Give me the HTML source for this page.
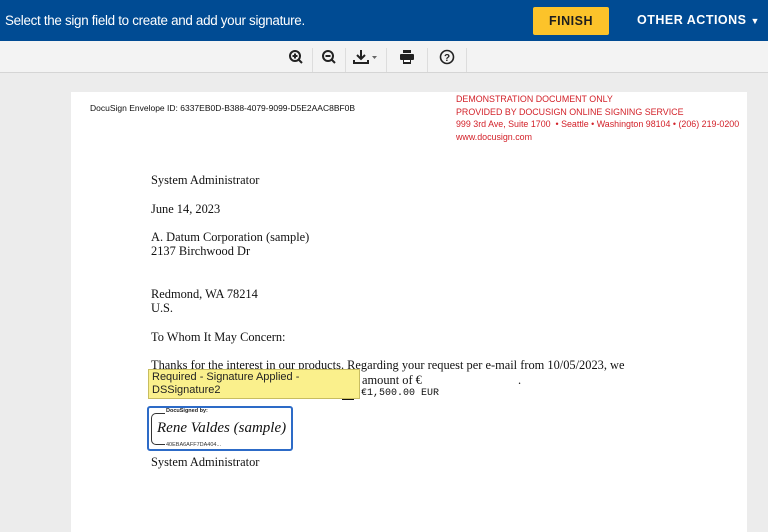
<!DOCTYPE html>
<html><head><style>
*{margin:0;padding:0;box-sizing:border-box}
body{width:768px;height:522px;overflow:hidden;background:#ececec;font-family:"Liberation Sans",sans-serif;position:relative}
.hdr{position:absolute;left:0;top:0;width:768px;height:41px;background:#004b93;color:#fff}
.hdr .msg{position:absolute;left:5px;top:13px;font-size:13.4px;letter-spacing:-0.3px}
.fin{position:absolute;left:533px;top:7px;width:76px;height:28px;background:#fcc32a;color:#1e1e1e;font-weight:bold;font-size:12.5px;text-align:center;line-height:28px;border-radius:2px;letter-spacing:.5px}
.oa{position:absolute;left:637px;top:13px;font-weight:bold;font-size:12.5px;letter-spacing:.5px}
.tb{position:absolute;left:0;top:41px;width:768px;height:32px;background:#f3f3f3;border-bottom:1px solid #d5d5d5}
.sep{position:absolute;top:7px;width:1px;height:24px;background:#ddd}
.page{position:absolute;left:71px;top:92px;width:676px;height:440px;background:#fff}
.t{position:absolute;font-family:"Liberation Serif",serif;font-size:12.4px;color:#111;white-space:nowrap}
.red{position:absolute;left:385px;top:1px;color:#d3222a;font-size:8.9px;line-height:12.5px;white-space:nowrap}
</style></head><body>
<div class="hdr"><div class="msg">Select the sign field to create and add your signature.</div>
<div class="fin">FINISH</div><div class="oa">OTHER ACTIONS <span style="font-size:9px">▼</span></div></div>
<div class="tb">
<svg style="position:absolute;left:288px;top:8px" width="16" height="16" viewBox="0 0 16 16"><circle cx="7" cy="7" r="5" fill="none" stroke="#222" stroke-width="2"/><path d="M10.5 10.5L14 14M7 4.5v5M4.5 7h5" stroke="#222" stroke-width="2"/></svg>
<div class="sep" style="left:312px"></div>
<svg style="position:absolute;left:321px;top:8px" width="16" height="16" viewBox="0 0 16 16"><circle cx="7" cy="7" r="5" fill="none" stroke="#222" stroke-width="2"/><path d="M10.5 10.5L14 14M4.5 7h5" stroke="#222" stroke-width="2"/></svg>
<div class="sep" style="left:345px"></div>
<svg style="position:absolute;left:353px;top:8px" width="26" height="16" viewBox="0 0 26 16"><path d="M8 1v9M4 6l4 4 4-4M1 11v3h14v-3" fill="none" stroke="#222" stroke-width="2"/><path d="M19 7h5l-2.5 3z" fill="#666"/></svg>
<div class="sep" style="left:386px"></div>
<svg style="position:absolute;left:399px;top:8px" width="16" height="16" viewBox="0 0 16 16"><rect x="4" y="1" width="8" height="3" fill="#222"/><rect x="1" y="5" width="14" height="6" rx="1" fill="#222"/><rect x="4" y="10" width="8" height="5" fill="#222"/><rect x="5" y="11" width="6" height="2" fill="#fff"/></svg>
<div class="sep" style="left:427px"></div>
<svg style="position:absolute;left:439px;top:8px" width="16" height="16" viewBox="0 0 16 16"><circle cx="8" cy="8" r="6.5" fill="none" stroke="#222" stroke-width="1.6"/><text x="8" y="12" font-size="10" font-weight="bold" text-anchor="middle" font-family="Liberation Sans" fill="#222">?</text></svg>
<div class="sep" style="left:466px"></div>
</div>
<div class="page">
<div style="position:absolute;left:19px;top:11px;font-size:8.5px;color:#111">DocuSign Envelope ID: 6337EB0D-B388-4079-9099-D5E2AAC8BF0B</div>
<div class="red">DEMONSTRATION DOCUMENT ONLY<br>PROVIDED BY DOCUSIGN ONLINE SIGNING SERVICE<br>999 3rd Ave, Suite 1700 &nbsp;• Seattle • Washington 98104 • (206) 219-0200<br>www.docusign.com</div>
<div class="t" style="left:80px;top:81px">System Administrator</div>
<div class="t" style="left:80px;top:110px">June 14, 2023</div>
<div class="t" style="left:80px;top:138px">A. Datum Corporation (sample)</div>
<div class="t" style="left:80px;top:152px">2137 Birchwood Dr</div>
<div class="t" style="left:80px;top:195px">Redmond, WA 78214</div>
<div class="t" style="left:80px;top:209px">U.S.</div>
<div class="t" style="left:80px;top:238px">To Whom It May Concern:</div>
<div class="t" style="left:80px;top:266px">Thanks for the interest in our products. Regarding your request per e-mail from 10/05/2023, we</div>
<div class="t" style="left:291px;top:281px">amount of €</div>
<div class="t" style="left:447px;top:281px">.</div>
<div style="position:absolute;left:271px;top:306px;width:12px;height:2px;background:#111"></div>
<div style="position:absolute;left:290px;top:296px;font-family:'Liberation Mono',monospace;font-size:10px;color:#111">€1,500.00 EUR</div>
<div style="position:absolute;left:77px;top:277px;width:212px;height:30px;background:#faf08c;border:1px solid #c8bd60;font-size:11px;line-height:13px;padding:1px 3px;color:#222">Required - Signature Applied -<br>DSSignature2</div>
<div style="position:absolute;left:76px;top:314px;width:146px;height:45px;border:2px solid #2d6bc7;border-radius:3px">
<div style="position:absolute;left:2px;top:5px;width:14px;height:32px;border:1px solid #333;border-right:none;border-radius:5px 0 0 5px"></div>
<div style="position:absolute;left:17px;top:0;font-size:5.5px;font-weight:bold;color:#222">DocuSigned by:</div>
<div style="position:absolute;left:8px;top:12px;font-family:'Liberation Serif',serif;font-style:italic;font-size:15px;color:#111;white-space:nowrap">Rene Valdes (sample)</div>
<div style="position:absolute;left:17px;top:34px;font-size:5.5px;color:#333">40EBA6AFF7DA404...</div>
</div>
<div class="t" style="left:80px;top:363px">System Administrator</div>
</div>
</body></html>
